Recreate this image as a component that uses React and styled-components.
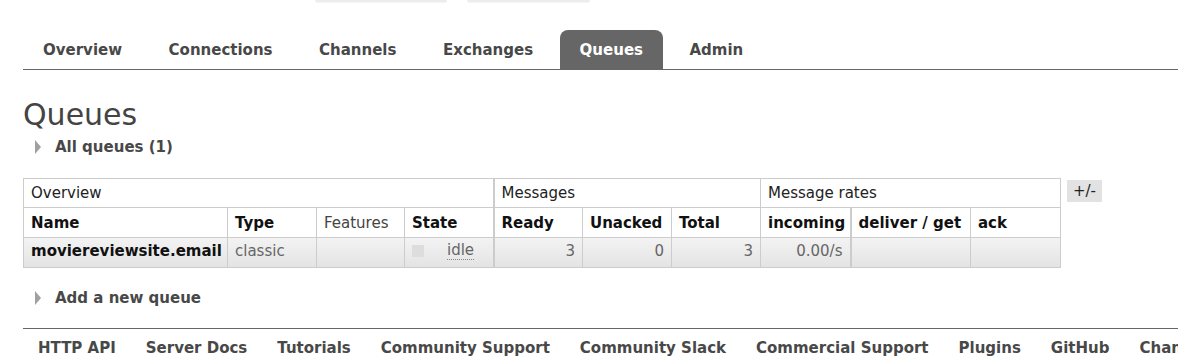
import React from "react";
import styled, { createGlobalStyle } from "styled-components";

const Global = createGlobalStyle`
  html, body { margin: 0; padding: 0; background: #fff; overflow: hidden; }
  body { font-family: "DejaVu Sans", Verdana, sans-serif; font-size: 15px; color: #484848; }
`;

const Page = styled.div`
  width: 1178px;
  overflow: hidden;
`;

const TopStrip = styled.div`
  display: flex;
  gap: 20px;
  padding-left: 315px;
  height: 3px;
`;

const TopBox = styled.div`
  width: ${(p) => p.$w}px;
  height: 2px;
  background: #ececec;
  border-radius: 0 0 4px 4px;
  box-shadow: 0 1px 1px rgba(0, 0, 0, 0.04);
`;

const Main = styled.div`
  padding-left: 23px;
`;

const Menu = styled.ul`
  list-style: none;
  margin: 27px 0 0 0;
  padding: 0;
  display: flex;
  gap: 6.5px;
  border-bottom: 1px solid #666;
`;

const Tab = styled.li`
  height: 39px;
  display: flex;
  align-items: center;
  padding: 0 20px 0 20px;
  font-weight: bold;
  font-size: 15px;
  color: ${(p) => (p.$active ? "#fff" : "#484848")};
  background: ${(p) => (p.$active ? "#666" : "transparent")};
  border-radius: 8px 8px 0 0;
  white-space: nowrap;
`;

const Title = styled.h1`
  margin: 27px 0 0 0;
  font-size: 30px;
  line-height: 36px;
  font-weight: normal;
  color: #444;
`;

const Section = styled.div`
  display: flex;
  align-items: center;
  gap: 14px;
  margin: ${(p) => p.$m};
  padding-left: 12px;
  height: 20px;
  font-weight: bold;
  font-size: 15px;
  color: #484848;
`;

const Arrow = styled.span`
  width: 0;
  height: 0;
  border-top: 7px solid transparent;
  border-bottom: 7px solid transparent;
  border-left: 6px solid #a0a0a0;
`;

const TableWrap = styled.div`
  display: flex;
  align-items: flex-start;
  gap: 6px;
  margin-top: 21px;
`;

const Table = styled.table`
  border-collapse: collapse;
  table-layout: fixed;
  width: 1037px;
  font-size: 15px;
`;

const Col = styled.col`
  width: ${(p) => p.$w}px;
`;

const GroupTh = styled.th`
  border: 1px solid #ccc;
  height: 28px;
  padding: 0 7px;
  text-align: left;
  font-weight: normal;
  color: #222;
  white-space: nowrap;
  border-left-width: ${(p) => (p.$thick ? "2px" : "1px")};
`;

const HeadTh = styled.th`
  border: 1px solid #ccc;
  height: 29px;
  padding: 0 7px;
  text-align: left;
  font-weight: ${(p) => (p.$light ? "normal" : "bold")};
  color: ${(p) => (p.$light ? "#444" : "#111")};
  white-space: nowrap;
  border-left-width: ${(p) => (p.$thick ? "2px" : "1px")};
`;

const DataRow = styled.tr`
  background: linear-gradient(#f3f3f3, #e3e3e3);
`;

const Td = styled.td`
  border: 1px solid #ccc;
  height: 25px;
  padding: 0 7px 4px 7px;
  text-align: ${(p) => (p.$right ? "right" : "left")};
  color: ${(p) => (p.$strong ? "#111" : "#666")};
  font-weight: ${(p) => (p.$strong ? "bold" : "normal")};
  white-space: nowrap;
  border-left-width: ${(p) => (p.$thick ? "2px" : "1px")};
`;

const StateCell = styled.div`
  display: flex;
  align-items: center;
  gap: 23px;
`;

const StateBox = styled.span`
  width: 12px;
  height: 12px;
  background: #ddd;
`;

const Idle = styled.span`
  color: #666;
  border-bottom: 1px dotted #888;
  line-height: 17px;
`;

const PlusMinus = styled.div`
  margin-top: 2px;
  width: 35px;
  height: 22px;
  background: #e2e2e2;
  display: flex;
  align-items: center;
  justify-content: center;
  font-size: 15px;
  color: #222;
`;

const Footer = styled.ul`
  list-style: none;
  margin: 20px 0 0 0;
  padding: 9px 0 0 0;
  border-top: 1px solid #666;
  display: flex;
  white-space: nowrap;
`;

const FootLink = styled.li`
  padding: 0 15px;
  font-weight: bold;
  font-size: 15px;
  line-height: 20px;
  color: #484848;
`;

const tabs = ["Overview", "Connections", "Channels", "Exchanges", "Queues", "Admin"];
const footer = [
  "HTTP API",
  "Server Docs",
  "Tutorials",
  "Community Support",
  "Community Slack",
  "Commercial Support",
  "Plugins",
  "GitHub",
  "Changelog",
];
const widths = [204, 89, 88, 89, 89, 89, 89, 90, 120, 90];

export default function App() {
  return (
    <Page>
      <Global />
      <TopStrip>
        <TopBox $w={132} />
        <TopBox $w={123} />
      </TopStrip>
      <Main>
        <Menu>
          {tabs.map((t) => (
            <Tab key={t} $active={t === "Queues"}>
              {t}
            </Tab>
          ))}
        </Menu>
        <Title>Queues</Title>
        <Section $m="4px 0 0 0">
          <Arrow />
          All queues (1)
        </Section>
        <TableWrap>
          <Table>
            <colgroup>
              {widths.map((w, i) => (
                <Col key={i} $w={w} />
              ))}
            </colgroup>
            <thead>
              <tr>
                <GroupTh colSpan={4}>Overview</GroupTh>
                <GroupTh colSpan={3} $thick>Messages</GroupTh>
                <GroupTh colSpan={3}>Message rates</GroupTh>
              </tr>
              <tr>
                <HeadTh>Name</HeadTh>
                <HeadTh>Type</HeadTh>
                <HeadTh $light>Features</HeadTh>
                <HeadTh>State</HeadTh>
                <HeadTh $thick>Ready</HeadTh>
                <HeadTh>Unacked</HeadTh>
                <HeadTh>Total</HeadTh>
                <HeadTh>incoming</HeadTh>
                <HeadTh $thick>deliver / get</HeadTh>
                <HeadTh>ack</HeadTh>
              </tr>
            </thead>
            <tbody>
              <DataRow>
                <Td $strong>moviereviewsite.email</Td>
                <Td>classic</Td>
                <Td />
                <Td>
                  <StateCell>
                    <StateBox />
                    <Idle>idle</Idle>
                  </StateCell>
                </Td>
                <Td $right $thick>3</Td>
                <Td $right>0</Td>
                <Td $right>3</Td>
                <Td $right>0.00/s</Td>
                <Td $thick />
                <Td />
              </DataRow>
            </tbody>
          </Table>
          <PlusMinus>+/-</PlusMinus>
        </TableWrap>
        <Section $m="20px 0 0 0">
          <Arrow />
          Add a new queue
        </Section>
        <Footer>
          {footer.map((f) => (
            <FootLink key={f}>{f}</FootLink>
          ))}
        </Footer>
      </Main>
    </Page>
  );
}
